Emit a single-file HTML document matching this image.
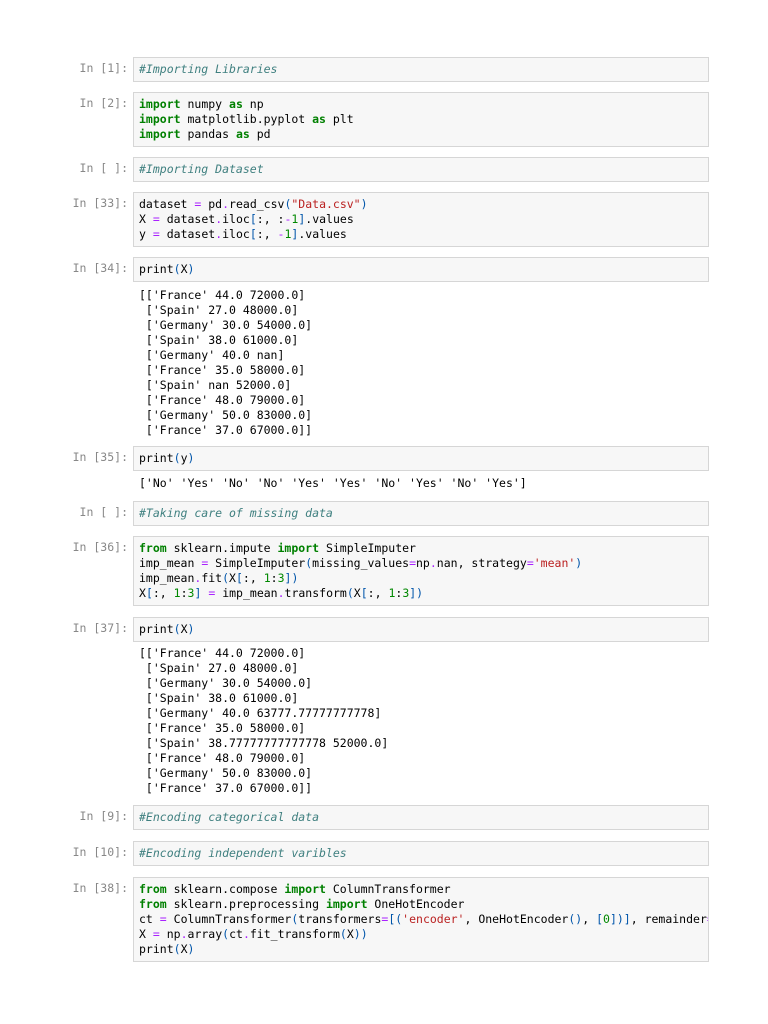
<!DOCTYPE html>
<html><head><meta charset="utf-8"><style>
body{margin:0;width:768px;height:1024px;background:#fff;position:relative;overflow:hidden;font-family:"DejaVu Sans Mono","Liberation Mono",monospace;font-size:11.5px;}
.p{position:absolute;right:640px;color:#888;line-height:15px;white-space:pre;text-align:right}
.c{position:absolute;left:133px;width:564px;background:#f7f7f7;border:1px solid #d6d6d6;padding:4px 5px;line-height:15px;white-space:pre;overflow:hidden;color:#000}
.o{position:absolute;left:139px;line-height:15px;white-space:pre;color:#000}
.k{color:#008000;font-weight:bold}
.m{color:#408080;font-style:italic}
.s{color:#BA2121}
.n{color:#008800}
.op{color:#AA22FF}
.b{color:#0055AA}
</style></head><body>
<div class="p" style="top:61px">In [1]:</div>
<div class="c" style="top:57px"><span class="m">#Importing Libraries</span></div>

<div class="p" style="top:96px">In [2]:</div>
<div class="c" style="top:92px"><span class="k">import</span> numpy <span class="k">as</span> np
<span class="k">import</span> matplotlib.pyplot <span class="k">as</span> plt
<span class="k">import</span> pandas <span class="k">as</span> pd</div>

<div class="p" style="top:161px">In [ ]:</div>
<div class="c" style="top:157px"><span class="m">#Importing Dataset</span></div>

<div class="p" style="top:196px">In [33]:</div>
<div class="c" style="top:192px">dataset <span class="op">=</span> pd<span class="op">.</span>read_csv<span class="b">(</span><span class="s">"Data.csv"</span><span class="b">)</span>
X <span class="op">=</span> dataset<span class="op">.</span>iloc<span class="b">[</span>:, :<span class="op">-</span><span class="n">1</span><span class="b">]</span>.values
y <span class="op">=</span> dataset<span class="op">.</span>iloc<span class="b">[</span>:, <span class="op">-</span><span class="n">1</span><span class="b">]</span>.values</div>

<div class="p" style="top:261px">In [34]:</div>
<div class="c" style="top:257px">print<span class="b">(</span>X<span class="b">)</span></div>
<div class="o" style="top:288px">[['France' 44.0 72000.0]
 ['Spain' 27.0 48000.0]
 ['Germany' 30.0 54000.0]
 ['Spain' 38.0 61000.0]
 ['Germany' 40.0 nan]
 ['France' 35.0 58000.0]
 ['Spain' nan 52000.0]
 ['France' 48.0 79000.0]
 ['Germany' 50.0 83000.0]
 ['France' 37.0 67000.0]]</div>

<div class="p" style="top:450px">In [35]:</div>
<div class="c" style="top:446px">print<span class="b">(</span>y<span class="b">)</span></div>
<div class="o" style="top:476px">['No' 'Yes' 'No' 'No' 'Yes' 'Yes' 'No' 'Yes' 'No' 'Yes']</div>

<div class="p" style="top:505px">In [ ]:</div>
<div class="c" style="top:501px"><span class="m">#Taking care of missing data</span></div>

<div class="p" style="top:540px">In [36]:</div>
<div class="c" style="top:536px"><span class="k">from</span> sklearn.impute <span class="k">import</span> SimpleImputer
imp_mean <span class="op">=</span> SimpleImputer<span class="b">(</span>missing_values<span class="op">=</span>np<span class="op">.</span>nan, strategy<span class="op">=</span><span class="s">'mean'</span><span class="b">)</span>
imp_mean<span class="op">.</span>fit<span class="b">(</span>X<span class="b">[</span>:, <span class="n">1</span>:<span class="n">3</span><span class="b">])</span>
X<span class="b">[</span>:, <span class="n">1</span>:<span class="n">3</span><span class="b">]</span> <span class="op">=</span> imp_mean<span class="op">.</span>transform<span class="b">(</span>X<span class="b">[</span>:, <span class="n">1</span>:<span class="n">3</span><span class="b">])</span></div>

<div class="p" style="top:621px">In [37]:</div>
<div class="c" style="top:617px">print<span class="b">(</span>X<span class="b">)</span></div>
<div class="o" style="top:646px">[['France' 44.0 72000.0]
 ['Spain' 27.0 48000.0]
 ['Germany' 30.0 54000.0]
 ['Spain' 38.0 61000.0]
 ['Germany' 40.0 63777.77777777778]
 ['France' 35.0 58000.0]
 ['Spain' 38.77777777777778 52000.0]
 ['France' 48.0 79000.0]
 ['Germany' 50.0 83000.0]
 ['France' 37.0 67000.0]]</div>

<div class="p" style="top:809px">In [9]:</div>
<div class="c" style="top:805px"><span class="m">#Encoding categorical data</span></div>

<div class="p" style="top:845px">In [10]:</div>
<div class="c" style="top:841px"><span class="m">#Encoding independent varibles</span></div>

<div class="p" style="top:881px">In [38]:</div>
<div class="c" style="top:877px"><span class="k">from</span> sklearn.compose <span class="k">import</span> ColumnTransformer
<span class="k">from</span> sklearn.preprocessing <span class="k">import</span> OneHotEncoder
ct <span class="op">=</span> ColumnTransformer<span class="b">(</span>transformers<span class="op">=</span><span class="b">[(</span><span class="s">'encoder'</span>, OneHotEncoder<span class="b">()</span>, <span class="b">[</span><span class="n">0</span><span class="b">])]</span>, remainder<span class="op">=</span>'passthrough'<span class="b">)</span>
X <span class="op">=</span> np<span class="op">.</span>array<span class="b">(</span>ct<span class="op">.</span>fit_transform<span class="b">(</span>X<span class="b">))</span>
print<span class="b">(</span>X<span class="b">)</span></div>
</body></html>
